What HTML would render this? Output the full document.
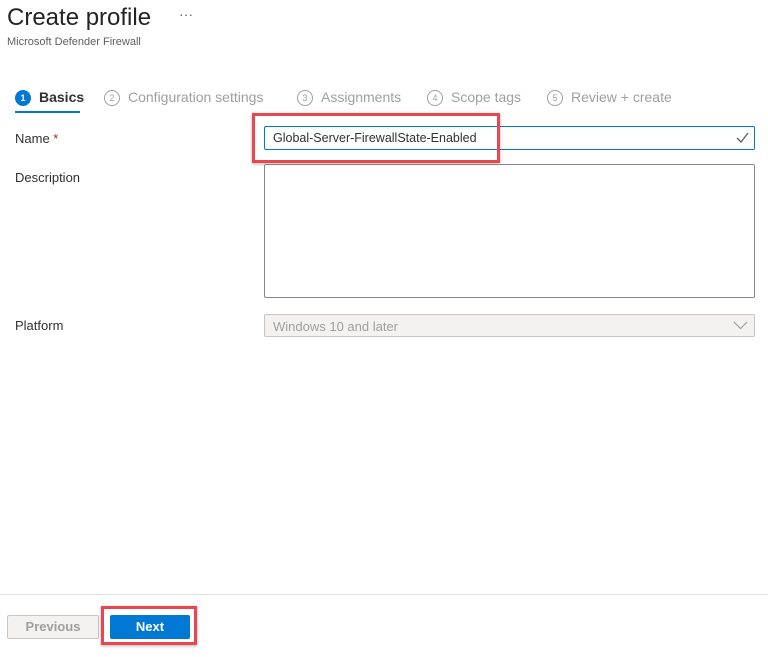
<!DOCTYPE html>
<html><head><style>
*{box-sizing:border-box;margin:0;padding:0}
body{width:768px;height:657px;background:#fff;font-family:"Liberation Sans",sans-serif;position:relative;overflow:hidden;color:#323130}
.a{position:absolute}
.step{position:absolute;top:89px;font-size:14px;color:#a19f9d;white-space:nowrap}
.c{display:inline-block;width:16px;height:16px;border:1px solid #a19f9d;border-radius:50%;font-size:9px;text-align:center;line-height:14px;margin-right:8px;vertical-align:1px}
.lbl{position:absolute;left:15px;font-size:13px;color:#323130}
</style></head><body>
<div class="a" style="left:7px;top:4px;font-size:24px;color:#252423">Create profile</div>
<div class="a" style="left:179px;top:6px;font-size:14px;color:#605e5c">···</div>
<div class="a" style="left:7px;top:36px;font-size:11px;color:#605e5c">Microsoft Defender Firewall</div>
<div class="step" style="left:15px;color:#323130;font-weight:bold"><span class="c" style="background:#0078d4;border-color:#0078d4;color:#fff;font-weight:bold">1</span>Basics</div>
<div class="a" style="left:15px;top:111px;width:65px;height:2px;background:#0078d4"></div>
<div class="step" style="left:104px"><span class="c">2</span>Configuration settings</div>
<div class="step" style="left:297px"><span class="c">3</span>Assignments</div>
<div class="step" style="left:427px"><span class="c">4</span>Scope tags</div>
<div class="step" style="left:547px"><span class="c">5</span>Review + create</div>
<div class="lbl" style="top:131px">Name <span style="color:#a4262c">*</span></div>
<div class="a" style="left:264px;top:126px;width:491px;height:24px;border:1px solid #0078d4;border-radius:2px;font-size:12.5px;padding:4px 8px;color:#323130">Global-Server-FirewallState-Enabled</div>
<svg class="a" style="left:736px;top:131px" width="13" height="13"><path d="M1 7l4 4 7-9" stroke="#605e5c" stroke-width="1.3" fill="none"/></svg>
<div class="a" style="left:252px;top:113px;width:248px;height:50px;border:3px solid #e8474f;box-shadow:0 1px 3px rgba(0,0,0,.3)"></div>
<div class="lbl" style="top:170px">Description</div>
<div class="a" style="left:264px;top:164px;width:491px;height:134px;border:1px solid #8a8886;border-radius:2px"></div>
<div class="lbl" style="top:318px">Platform</div>
<div class="a" style="left:264px;top:314px;width:491px;height:23px;border:1px solid #c8c6c4;background:#f3f2f1;border-radius:2px;font-size:13px;padding:4px 8px;color:#a19f9d">Windows 10 and later</div>
<svg class="a" style="left:733px;top:320px" width="15" height="10"><path d="M1 2l6.5 6.5L14 2" stroke="#a19f9d" stroke-width="1.2" fill="none"/></svg>
<div class="a" style="left:0;top:594px;width:768px;height:1px;background:#e1dfdd"></div>
<div class="a" style="left:7px;top:615px;width:92px;height:24px;border:1px solid #c8c6c4;background:#f3f2f1;border-radius:2px;font-size:13px;font-weight:bold;color:#a19f9d;text-align:center;line-height:22px">Previous</div>
<div class="a" style="left:110px;top:615px;width:80px;height:24px;background:#0078d4;border-radius:2px;font-size:13px;font-weight:bold;color:#fff;text-align:center;line-height:24px">Next</div>
<div class="a" style="left:101px;top:606px;width:96px;height:39px;border:3px solid #e8474f;box-shadow:0 1px 3px rgba(0,0,0,.3)"></div>
</body></html>
